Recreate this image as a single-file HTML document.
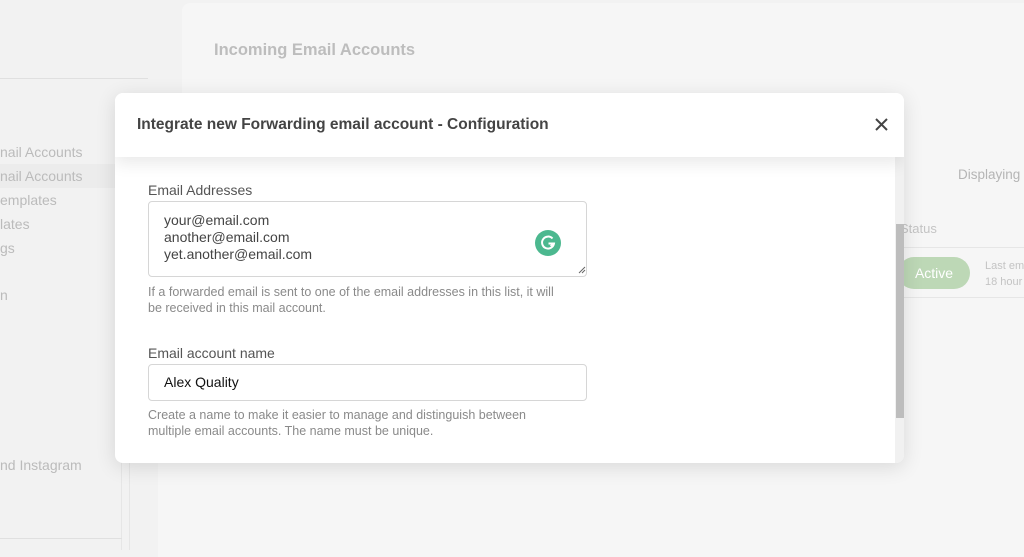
<!DOCTYPE html>
<html><head><meta charset="utf-8"><style>
*{box-sizing:border-box;margin:0;padding:0}
body{width:1024px;height:550px;overflow:hidden;background:#f2f2f2;font-family:"Liberation Sans",Arial,sans-serif;position:relative}
.abs{position:absolute}
.side{color:#bbb;font-size:14px;white-space:nowrap}
.muted{color:#b5b5b5}
.help{color:#8a8a8a;font-size:12.5px;line-height:15.5px}
.lbl{color:#555;font-size:14px}
</style></head><body>
<!-- sidebar -->
<div class="abs" style="left:0;top:78px;width:148px;height:1px;background:#e0e0e0"></div>
<div class="abs" style="left:0;top:164px;width:140px;height:24px;background:#ececec"></div>
<div class="abs side" style="left:0;top:144px">nail Accounts</div>
<div class="abs side" style="left:0;top:168px">nail Accounts</div>
<div class="abs side" style="left:0;top:192px">emplates</div>
<div class="abs side" style="left:0;top:216px">lates</div>
<div class="abs side" style="left:0;top:240px">gs</div>
<div class="abs side" style="left:0;top:287px">n</div>
<div class="abs side" style="left:0;top:457px">nd Instagram</div>
<div class="abs" style="left:121px;top:160px;width:1px;height:390px;background:#e6e6e6"></div>
<div class="abs" style="left:0;top:538px;width:122px;height:1px;background:#e0e0e0"></div>
<div class="abs" style="left:129px;top:160px;width:1px;height:390px;background:#e6e6e6"></div>
<!-- main cards -->
<div class="abs" style="left:182px;top:3px;width:860px;height:134px;background:#f6f6f6;border-radius:8px"></div>
<div class="abs" style="left:214px;top:41px;font-size:16.5px;font-weight:bold;color:#bdbdbd">Incoming Email Accounts</div>
<div class="abs" style="left:158px;top:137px;width:880px;height:420px;background:#f6f6f6"></div>
<div class="abs muted" style="left:958px;top:167px;font-size:13.5px;white-space:nowrap">Displaying 1</div>
<div class="abs" style="left:900px;top:221px;font-size:13px;color:#c4c4c4">Status</div>
<div class="abs" style="left:880px;top:247px;width:150px;height:1px;background:#e6e6e6"></div>
<div class="abs" style="left:880px;top:297px;width:150px;height:1px;background:#e6e6e6"></div>
<div class="abs" style="left:898px;top:257px;width:72px;height:32px;border-radius:16px;background:#bdd8b6;color:#fff;font-size:14px;line-height:32px;text-align:center">Active</div>
<div class="abs" style="left:985px;top:258px;font-size:11px;color:#c4c4c4;line-height:16px;white-space:nowrap">Last em<br>18 hour</div>
<!-- modal -->
<div class="abs" style="left:115px;top:93px;width:789px;height:370px;background:#fff;border-radius:8px;box-shadow:0 4px 20px rgba(0,0,0,.12);overflow:hidden">
  <div class="abs" style="left:0;top:0;width:789px;height:64px;background:#fff;box-shadow:0 6px 16px rgba(0,0,0,.09);z-index:2"></div>
  <div class="abs" style="left:22px;top:23px;font-size:15.5px;font-weight:bold;color:#444;z-index:3">Integrate new Forwarding email account - Configuration</div>
  <svg class="abs" style="left:760px;top:25px;z-index:3" width="13" height="13" viewBox="0 0 13 13"><path d="M1 1L12 12M12 1L1 12" stroke="#444" stroke-width="2"/></svg>
  <div class="abs" style="left:780px;top:64px;width:9px;height:306px;background:#f1f1f1"></div>
  <div class="abs" style="left:781px;top:131px;width:8px;height:194px;background:#bdbdbd"></div>
  <div class="abs lbl" style="left:33px;top:89px">Email Addresses</div>
  <div class="abs" style="left:33px;top:108px;width:439px;height:76px;border:1px solid #d6d6d6;border-radius:4px"></div>
  <div class="abs" style="left:49px;top:119px;font-size:14px;line-height:17px;color:#444">your@email.com<br>another@email.com<br>yet.another@email.com</div>
  <svg class="abs" style="left:420px;top:137px" width="26" height="26" viewBox="0 0 26 26"><circle cx="13" cy="13" r="13" fill="#4cb88f"/><path d="M17.5 8.5A6 6 0 1 0 19 13.5H13.5" fill="none" stroke="#fff" stroke-width="2"/><path d="M15.5 16l3 -2.5" stroke="#fff" stroke-width="1.6"/></svg>
  <svg class="abs" style="left:463px;top:173px" width="8" height="8"><path d="M1 7L7 1M4 7L7 4" stroke="#666" stroke-width="1"/></svg>
  <div class="abs help" style="left:33px;top:192px;width:418px">If a forwarded email is sent to one of the email addresses in this list, it will be received in this mail account.</div>
  <div class="abs lbl" style="left:33px;top:252px">Email account name</div>
  <div class="abs" style="left:33px;top:271px;width:439px;height:37px;border:1px solid #d6d6d6;border-radius:4px"></div>
  <div class="abs" style="left:49px;top:281px;font-size:14px;color:#111">Alex Quality</div>
  <div class="abs help" style="left:33px;top:315px;width:400px">Create a name to make it easier to manage and distinguish between multiple email accounts. The name must be unique.</div>
</div>
</body></html>
